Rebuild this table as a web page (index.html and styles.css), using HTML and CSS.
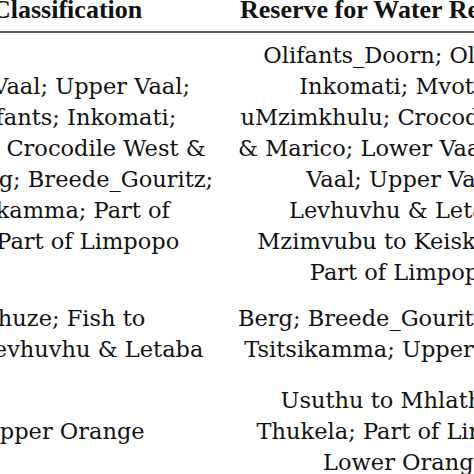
FILE: index.html
```html
<!DOCTYPE html>
<html lang="en">
<head>
<meta charset="utf-8">
<title>Classification and Reserve</title>
<link rel="stylesheet" href="styles.css">
</head>
<body>
<table class="tbl">
  <colgroup><col class="col-class"><col class="col-reserve"></colgroup>
  <thead>
    <tr>
      <th class="th-class">Classification</th>
      <th class="th-reserve">Reserve for Water Resources</th>
    </tr>
  </thead>
  <tbody>
    <tr>
      <td>Thukela; Vaal; Upper Vaal;<br>Vaal; Olifants; Inkomati;<br>Mhlathuze; Crocodile West &amp;<br>Marico; Berg; Breede_Gouritz;<br>to Tsitsikamma; Part of<br>Orange; Part of Limpopo</td>
      <td>Olifants_Doorn; Olifants;<br>Inkomati; Mvoti to<br>uMzimkhulu; Crocodile West<br>&amp; Marico; Lower Vaal; Middle<br>Vaal; Upper Vaal;<br>Levhuvhu &amp; Letaba;<br>Mzimvubu to Keiskamma;<br>Part of Limpopo;</td>
    </tr>
    <tr class="row-mid">
      <td>Mhlathuze; Fish to<br>Thukela; Levhuvhu &amp; Letaba</td>
      <td>Berg; Breede_Gouritz; Fish to<br>Tsitsikamma; Upper Orange</td>
    </tr>
    <tr class="row-last">
      <td>and Upper Orange</td>
      <td>Usuthu to Mhlathuze;<br>Thukela; Part of Limpopo;<br>Lower Orange</td>
    </tr>
  </tbody>
</table>
</body>
</html>
```

FILE: styles.css
```css
html, body {
  margin: 0;
  padding: 0;
  background: #ffffff;
  overflow: hidden;
}

body {
  width: 474px;
  height: 474px;
}

.tbl {
  border-collapse: collapse;
  table-layout: fixed;
  width: 734px;
  margin: -6px 0 0 -162px;
  color: #121212;
}

.col-class { width: 400px; }
.col-reserve { width: 334px; }

th {
  font: bold 26px/31px "Liberation Serif", serif;
  text-align: left;
  white-space: nowrap;
  padding: 0 0 6px;
  border-bottom: 2px solid #5c5c5c;
}

.th-class { padding-left: 154px; }
.th-reserve { padding-left: 2px; }

td {
  font: 22.5px/31px "DejaVu Serif", serif;
  text-align: center;
  vertical-align: middle;
  white-space: nowrap;
  padding: 7px 0 8px;
}

.row-mid td { padding-bottom: 13px; }
```
